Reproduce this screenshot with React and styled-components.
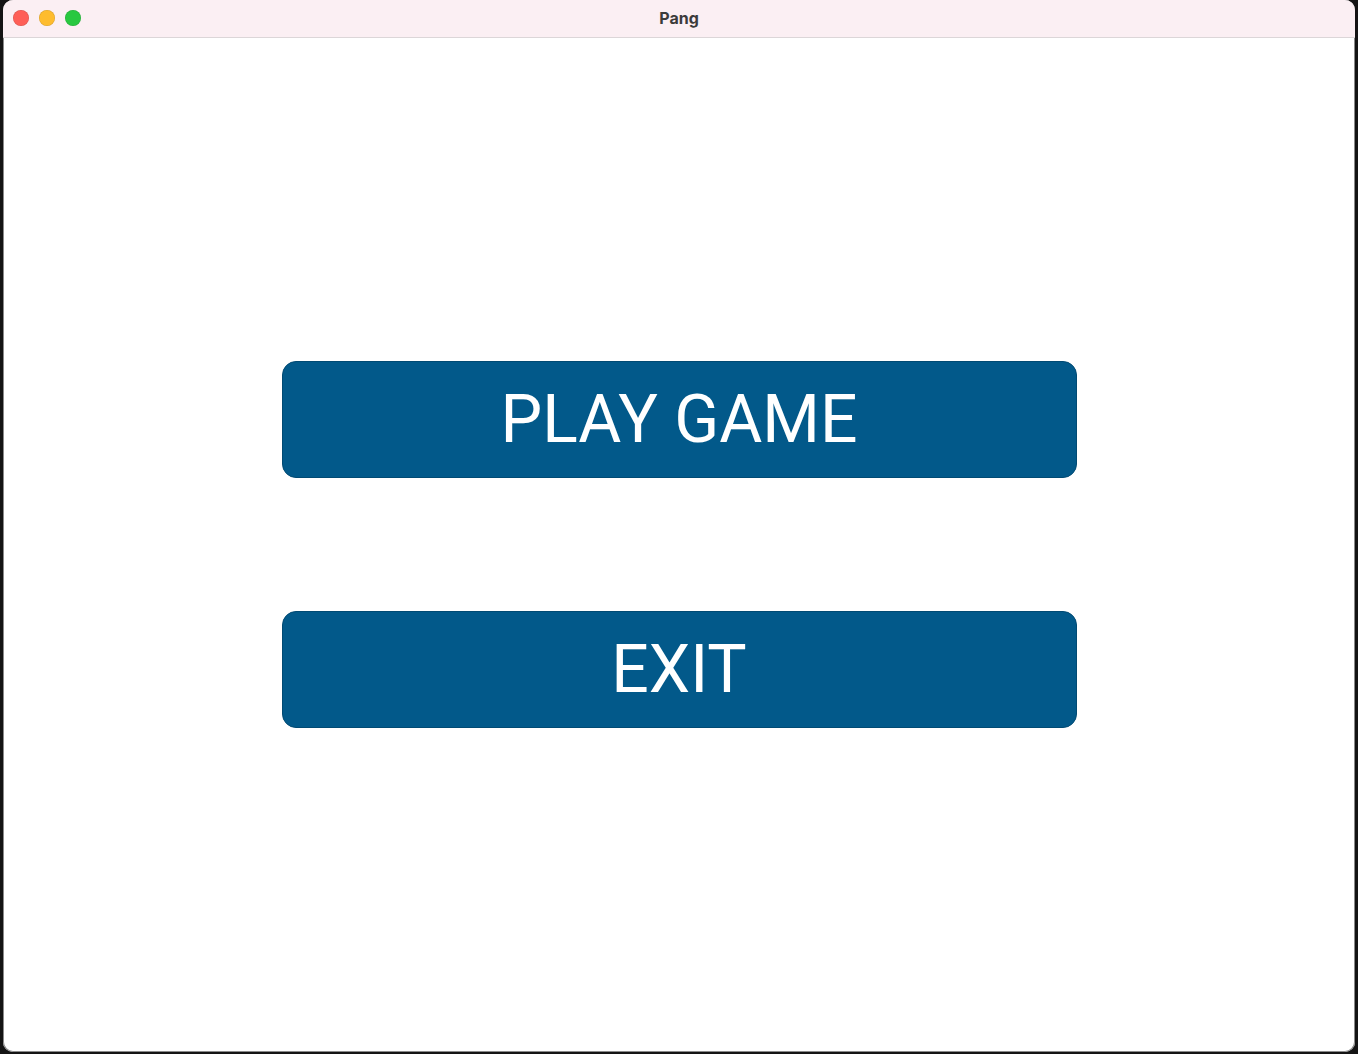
import React from 'react';
import styled, { createGlobalStyle } from 'styled-components';

const GlobalStyle = createGlobalStyle`
  html, body {
    margin: 0;
    padding: 0;
    background: #141414;
  }
  #root {
    width: 1358px;
    height: 1054px;
    display: flex;
    padding: 0 3px 2px 3px;
    box-sizing: border-box;
  }
`;

const Window = styled.div`
  flex: 1;
  display: flex;
  flex-direction: column;
  background: #fff;
  border-radius: 10px;
  overflow: hidden;
  box-shadow: 0 0 0 1px #8a8a8a inset;
`;

const TitleBar = styled.div`
  height: 37px;
  flex-shrink: 0;
  display: flex;
  align-items: center;
  position: relative;
  background: #fbeff3;
  border-bottom: 1px solid #dcd6d8;
`;

const Lights = styled.div`
  display: flex;
  gap: 10px;
  padding-left: 10px;
  margin-top: -1px;
`;

const Light = styled.span`
  width: 16px;
  height: 16px;
  border-radius: 50%;
  background: ${p => p.color};
  box-shadow: inset 0 0 0 0.5px rgba(0, 0, 0, 0.15);
`;

const Title = styled.div`
  position: absolute;
  left: 0;
  right: 0;
  top: 8px;
  text-align: center;
  font-family: "Inter", "Open Sans", sans-serif;
  font-weight: 700;
  font-size: 16px;
  line-height: 20px;
  color: #3b3b3b;
  pointer-events: none;
`;

const Content = styled.div`
  flex: 1;
  display: flex;
  flex-direction: column;
  align-items: center;
  justify-content: center;
  gap: 133px;
  padding-bottom: 1px;
`;

const MenuButton = styled.button`
  width: 795px;
  height: 117px;
  border-radius: 14px;
  border: 1px solid #014a73;
  background: #02598a;
  color: #fff;
  font-family: "Roboto", sans-serif;
  font-size: 66px;
  font-weight: 400;
  line-height: 1;
  padding: 0;
  cursor: pointer;
`;

export default function App() {
  return (
    <>
      <GlobalStyle />
      <Window>
        <TitleBar>
          <Lights>
            <Light color="#fe5f57" />
            <Light color="#febc2e" />
            <Light color="#28c840" />
          </Lights>
          <Title>Pang</Title>
        </TitleBar>
        <Content>
          <MenuButton>PLAY GAME</MenuButton>
          <MenuButton>EXIT</MenuButton>
        </Content>
      </Window>
    </>
  );
}
